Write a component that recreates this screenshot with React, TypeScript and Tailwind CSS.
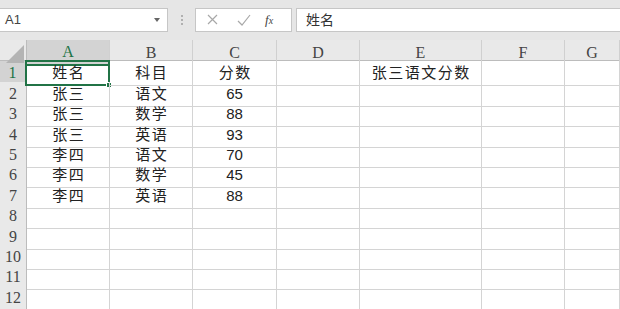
import React from 'react';

const cols = ['A', 'B', 'C', 'D', 'E', 'F', 'G'];

const data: Record<number, string[]> = {
    1: ['姓名', '科目', '分数', '', '张三语文分数', '', ''],
    2: ['张三', '语文', '65', '', '', '', ''],
    3: ['张三', '数学', '88', '', '', '', ''],
    4: ['张三', '英语', '93', '', '', '', ''],
    5: ['李四', '语文', '70', '', '', '', ''],
    6: ['李四', '数学', '45', '', '', '', ''],
    7: ['李四', '英语', '88', '', '', '', ''],
};

// rows are ~20.4px tall, written out so the lines land on whole pixels
const rowHeights = ['h-[21px]', 'h-[20px]', 'h-[21px]', 'h-[20px]', 'h-[20px]', 'h-[21px]', 'h-[20px]', 'h-[21px]', 'h-[20px]', 'h-[20px]', 'h-[21px]', 'h-[20px]'];

const gridCols = 'grid grid-cols-[27px_83px_83px_84px_83px_122px_83px_1fr]';
const cjk = 'font-["Liberation_Sans","Noto_Sans_CJK_SC",sans-serif]';
const serif = 'font-["Liberation_Serif","DejaVu_Serif",serif]';

export default function App() {
    return (
        <div className="w-[620px] h-[309px] overflow-hidden bg-white">
            {/* Toolbar: name box + formula bar */}
            <div className="h-[40px] bg-[#e6e6e6] flex items-start pt-[8px]">
                <div className="w-[168px] h-[24px] bg-white border border-[#c6c6c6] border-l-0 flex items-center justify-between pl-[5px] pr-[7px]">
                    <span className="text-[13px] text-[#444] font-['Liberation_Sans',sans-serif]">A1</span>
                    <span className="w-0 h-0 border-l-[3px] border-r-[3px] border-t-[4px] border-l-transparent border-r-transparent border-t-[#666]" />
                </div>
                <div className="w-[27px] h-[24px] flex flex-col items-center justify-center gap-[2px]">
                    <span className="w-[2px] h-[2px] bg-[#b0b0b0]" />
                    <span className="w-[2px] h-[2px] bg-[#b0b0b0]" />
                    <span className="w-[2px] h-[2px] bg-[#b0b0b0]" />
                </div>
                <div className="w-[97px] h-[24px] bg-white border border-[#c6c6c6] flex items-center">
                    <svg width="30" height="22" viewBox="0 0 30 22" className="ml-[6px]">
                        <path d="M6 6 L15 15 M15 6 L6 15" stroke="#a8a8a8" strokeWidth="1.2" fill="none" />
                    </svg>
                    <svg width="30" height="22" viewBox="0 0 30 22">
                        <path d="M6 12 L10 16 L18 6" stroke="#a8a8a8" strokeWidth="1.2" fill="none" />
                    </svg>
                    <span className="ml-[3px] text-[13px] italic text-[#444] font-['Liberation_Serif',serif]">
                        f<span className="text-[10px]">x</span>
                    </span>
                </div>
                <div className="ml-[4px] flex-1 h-[24px] bg-white border border-[#c6c6c6] border-r-0 flex items-center pl-[9px]">
                    <span className={`text-[14px] text-[#333] ${cjk}`}>姓名</span>
                </div>
            </div>

            {/* Column headers */}
            <div className={`${gridCols} h-[21px] bg-[#e9e9e9] border-b border-[#bcbcbc]`}>
                <div className="relative border-r border-[#bcbcbc]">
                    <svg width="18" height="18" viewBox="0 0 18 18" className="absolute right-[2px] bottom-[2px]">
                        <polygon points="18,0 18,18 0,18" fill="#b4b4b4" />
                    </svg>
                </div>
                {cols.map((c, i) => (
                    <div
                        key={c}
                        className={`flex items-center justify-center text-[16px] ${serif} border-r border-[#d0d0d0] ${
                            i === 0 ? 'bg-[#d3d3d3] text-[#217346] border-b-2 border-b-[#217346] -mb-px' : 'text-[#444]'
                        }`}
                    >
                        {c}
                    </div>
                ))}
            </div>

            {/* Rows */}
            {rowHeights.map((h, r) => {
                const n = r + 1;
                const row = data[n] || ['', '', '', '', '', '', ''];
                return (
                    <div key={n} className={`${gridCols} ${h}`}>
                        <div
                            className={`flex items-center justify-center text-[16px] ${serif} border-b border-[#d0d0d0] ${
                                n === 1
                                    ? 'bg-[#d3d3d3] text-[#217346] border-r-2 border-r-[#217346]'
                                    : 'bg-[#e9e9e9] text-[#444] border-r border-r-[#bcbcbc]'
                            }`}
                        >
                            {n}
                        </div>
                        {row.map((v, ci) => (
                            <div
                                key={ci}
                                className={`relative flex items-center justify-center whitespace-nowrap text-[15px] text-[#222] ${cjk} border-r border-b border-[#d4d4d4]`}
                            >
                                <span className={/^\d+$/.test(v) ? '' : 'tracking-[1.5px] pl-[1.5px]'}>{v}</span>
                                {n === 1 && ci === 0 && (
                                    <div className="absolute -left-[2px] -top-px -right-px -bottom-px border-2 border-[#217346]">
                                        <div className="absolute -right-[4px] -bottom-[4px] w-[6px] h-[6px] bg-[#217346] border border-white" />
                                    </div>
                                )}
                            </div>
                        ))}
                    </div>
                );
            })}
        </div>
    );
}
